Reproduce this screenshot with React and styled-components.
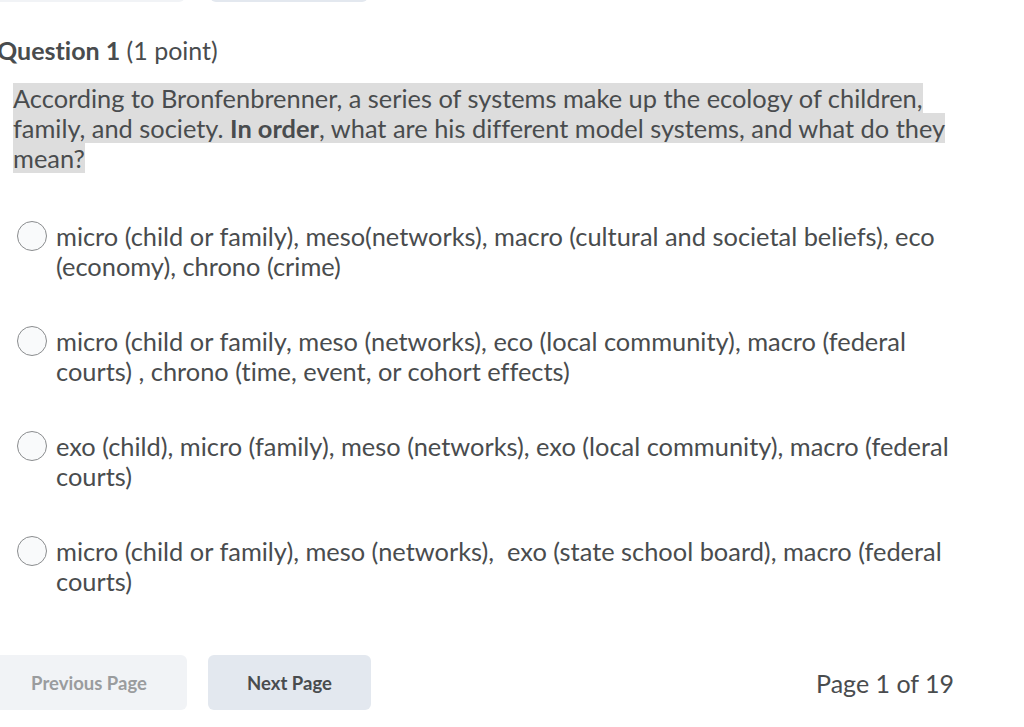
import React from "react";
import styled, { createGlobalStyle } from "styled-components";

const GlobalStyle = createGlobalStyle`
  html, body {
    margin: 0;
    padding: 0;
    background: #ffffff;
  }
  body {
    font-family: Lato, "Open Sans", sans-serif;
    font-variant-ligatures: none;
    color: #494c4e;
    overflow: hidden;
  }
`;

const Page = styled.div`
  width: 960px;
  height: 727px;
  overflow: hidden;
`;

const TopNav = styled.div`
  display: flex;
  gap: 25px;
  margin-top: -53px;
`;

const NavButton = styled.button`
  flex: none;
  height: 55px;
  width: ${(p) => p.$width}px;
  margin-left: ${(p) => p.$offset || 0}px;
  border: none;
  border-radius: 6px;
  background: ${(p) => (p.$primary ? "#e3e8ef" : "#f1f3f6")};
  color: ${(p) => (p.$primary ? "#494c4e" : "#9a9c9e")};
  font-family: Lato, sans-serif;
  font-variant-ligatures: none;
  font-weight: 700;
  font-size: 18.5px;
  cursor: pointer;
`;

const Title = styled.h2`
  margin: 32px 0 0 -3px;
  font-size: 25px;
  font-weight: 400;
  line-height: 32px;
  color: #494c4e;
`;

const Prompt = styled.div`
  margin: 17px 0 0 13px;
  font-size: 25.4px;
  line-height: 30px;
  width: 945px;
`;

const Highlight = styled.span`
  background: #dddddd;
`;

const Options = styled.div`
  display: flex;
  flex-direction: column;
  gap: 45px;
  margin: 48px 0 0 17px;
`;

const Option = styled.label`
  display: flex;
  align-items: flex-start;
  gap: 9px;
  font-size: 25.4px;
  line-height: 30px;
  white-space: pre-wrap;
  cursor: pointer;
`;

const Radio = styled.span`
  flex: none;
  width: 30px;
  height: 30px;
  border-radius: 50%;
  border: 1px solid #8a8c8e;
  background: #f9fafb;
  box-sizing: border-box;
`;

const Footer = styled.div`
  display: flex;
  align-items: center;
  margin-top: 59px;
  gap: 21px;
`;

const PageCount = styled.div`
  margin-left: auto;
  font-size: 25px;
  padding-right: 6px;
`;

const options = [
  "micro (child or family), meso(networks), macro (cultural and societal beliefs), eco (economy), chrono (crime)",
  "micro (child or family, meso (networks), eco (local community), macro (federal courts) , chrono (time, event, or cohort effects)",
  "exo (child), micro (family), meso (networks), exo (local community), macro (federal courts)",
  "micro (child or family), meso (networks),  exo (state school board), macro (federal courts)",
];

export default function App() {
  return (
    <Page>
      <GlobalStyle />
      <TopNav>
        <NavButton $width={194} $offset={-9}>
          Previous Page
        </NavButton>
        <NavButton $width={158} $primary>
          Next Page
        </NavButton>
      </TopNav>
      <Title>
        <b>Question 1</b> (1 point)
      </Title>
      <Prompt>
        <Highlight>
          According to Bronfenbrenner, a series of systems make up the ecology
          of children, family, and society. <b>In order</b>, what are his
          different model systems, and what do they mean?
        </Highlight>
      </Prompt>
      <Options>
        {options.map((text, i) => (
          <Option key={i}>
            <Radio />
            <span>{text}</span>
          </Option>
        ))}
      </Options>
      <Footer>
        <NavButton $width={196} $offset={-9}>
          Previous Page
        </NavButton>
        <NavButton $width={163} $primary>
          Next Page
        </NavButton>
        <PageCount>Page 1 of 19</PageCount>
      </Footer>
    </Page>
  );
}
